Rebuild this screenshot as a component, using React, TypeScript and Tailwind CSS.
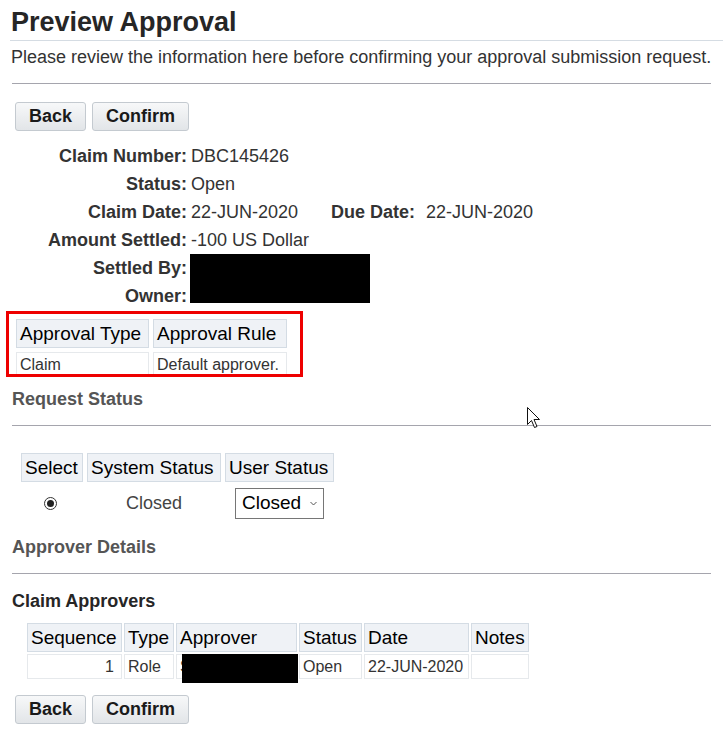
import React from 'react';

const headCell = "h-[29px] leading-[27px] px-[3px] bg-[#eff2f6] border border-[#d4dce4] text-[19px] text-black whitespace-nowrap";
const dataCell = "h-[25px] leading-[23px] px-[3px] bg-white border border-[#e6e9ec] text-[16px] text-[#333] whitespace-nowrap";

function Buttons() {
  return (
    <div className="flex gap-[6px] ml-[15px]">
      {['Back', 'Confirm'].map((label) => (
        <button
          key={label}
          className="h-[29px] px-[13px] leading-[21px] rounded-[3px] border border-[#c4cad0] bg-gradient-to-b from-[#f7f8f9] to-[#e2e5e8] text-[18px] font-bold text-[#1a1a1a]"
        >
          {label}
        </button>
      ))}
    </div>
  );
}

function InfoRow({ label, children }: { label: string; children?: React.ReactNode }) {
  return (
    <div className="flex h-[28px] leading-[28px]">
      <div className="w-[187px] text-right font-bold text-[#333]">{label}</div>
      <div className="pl-[4px] text-[#333]">{children}</div>
    </div>
  );
}

export default function App() {
  return (
    <div className="relative w-[723px] h-[730px] overflow-hidden bg-white font-['Liberation_Sans',Arial,sans-serif] text-[18px]">
      {/* Header */}
      <div className="ml-[10px] pt-[7px] pb-[2px] pl-[1px] border-b border-[#d5dce3]">
        <h1 className="text-[27px] leading-[31px] font-bold text-[#262626]">Preview Approval</h1>
      </div>
      <p className="mt-[5px] ml-[11px] leading-[22px] text-[#333]">
        Please review the information here before confirming your approval submission request.
      </p>
      <div className="mt-[15px] ml-[12px] w-[699px] border-t border-[#a5a5ad]" />

      <div className="mt-[18px]">
        <Buttons />
      </div>

      {/* Claim info */}
      <div className="relative mt-[11px]">
        <InfoRow label="Claim Number:">DBC145426</InfoRow>
        <InfoRow label="Status:">Open</InfoRow>
        <InfoRow label="Claim Date:">
          <span className="inline-block w-[140px]">22-JUN-2020</span>
          <span className="font-bold">Due Date:</span>
          <span className="ml-[11px]">22-JUN-2020</span>
        </InfoRow>
        <InfoRow label="Amount Settled:">-100 US Dollar</InfoRow>
        <InfoRow label="Settled By:" />
        <InfoRow label="Owner:" />
        <div className="absolute left-[190px] top-[112px] w-[180px] h-[49px] bg-black" />
      </div>

      {/* Approval type table */}
      <div className="relative">
        <div className="ml-[16px] mt-[9px] flex flex-col gap-[4px]">
          <div className="flex gap-[4px]">
            <div className={`${headCell} w-[133px]`}>Approval Type</div>
            <div className={`${headCell} w-[134px]`}>Approval Rule</div>
          </div>
          <div className="flex gap-[4px]">
            <div className={`${dataCell} w-[133px]`}>Claim</div>
            <div className={`${dataCell} w-[134px]`}>Default approver.</div>
          </div>
        </div>
        <div className="absolute left-[6px] top-[-8px] w-[297px] h-[66px] border-[3px] border-[#ee0000]" />
      </div>

      <h2 className="mt-[11px] ml-[12px] leading-[22px] font-bold text-[#555]">Request Status</h2>
      <div className="mt-[15px] ml-[12px] w-[699px] border-t border-[#a5a5ad]" />

      {/* Request status table */}
      <div className="ml-[21px] mt-[27px] flex flex-col gap-[4px]">
        <div className="flex gap-[4px]">
          <div className={`${headCell} w-[62px]`}>Select</div>
          <div className={`${headCell} w-[134px]`}>System Status</div>
          <div className={`${headCell} w-[109px]`}>User Status</div>
        </div>
        <div className="flex gap-[4px] h-[34px] items-center">
          <div className="w-[62px] flex justify-center">
            <div className="w-[13px] h-[13px] rounded-full border border-[#333] flex items-center justify-center ml-[-3px]">
              <div className="w-[7px] h-[7px] rounded-full bg-[#222]" />
            </div>
          </div>
          <div className="w-[134px] text-center text-[#444] leading-[22px]">Closed</div>
          <div className="w-[109px] flex justify-center">
            <div className="w-[89px] h-[31px] border border-[#767676] flex items-center justify-between pl-[6px] pr-[6px] bg-white">
              <span className="text-black text-[19px] leading-[22px]">Closed</span>
              <svg width="7" height="5" viewBox="0 0 7 5" className="mt-[1px]">
                <path d="M0.5 1 L3.5 4 L6.5 1" fill="none" stroke="#555" strokeWidth="1" />
              </svg>
            </div>
          </div>
        </div>
      </div>

      <h2 className="mt-[16px] ml-[12px] leading-[22px] font-bold text-[#555]">Approver Details</h2>
      <div className="mt-[15px] ml-[12px] w-[699px] border-t border-[#a5a5ad]" />

      <h3 className="mt-[16px] ml-[12px] leading-[22px] font-bold text-[#262626]">Claim Approvers</h3>

      {/* Approvers table */}
      <div className="ml-[27px] mt-[11px] flex flex-col gap-[2px]">
        <div className="flex gap-[2px]">
          <div className={`${headCell} w-[95px]`}>Sequence</div>
          <div className={`${headCell} w-[50px]`}>Type</div>
          <div className={`${headCell} w-[121px]`}>Approver</div>
          <div className={`${headCell} w-[63px]`}>Status</div>
          <div className={`${headCell} w-[105px]`}>Date</div>
          <div className={`${headCell} w-[58px]`}>Notes</div>
        </div>
        <div className="flex gap-[2px]">
          <div className={`${dataCell} w-[95px] text-right pr-[7px]`}>1</div>
          <div className={`${dataCell} w-[50px]`}>Role</div>
          <div className={`${dataCell} w-[121px] relative overflow-visible`}>
            S
            <div className="absolute left-[5px] top-[-1px] w-[116px] h-[29px] bg-black" />
          </div>
          <div className={`${dataCell} w-[63px]`}>Open</div>
          <div className={`${dataCell} w-[105px]`}>22-JUN-2020</div>
          <div className={`${dataCell} w-[58px]`} />
        </div>
      </div>

      <div className="mt-[16px]">
        <Buttons />
      </div>

      {/* Mouse pointer */}
      <svg className="absolute left-[527px] top-[407px]" width="14" height="22" viewBox="0 0 14 22">
        <path d="M0.5 0.5 L0.5 17.5 L4.5 13.5 L7.5 20.5 L10 19.5 L7 12.5 L12.5 12.5 Z" fill="white" stroke="#111" strokeWidth="1" strokeLinejoin="miter" />
      </svg>
    </div>
  );
}
